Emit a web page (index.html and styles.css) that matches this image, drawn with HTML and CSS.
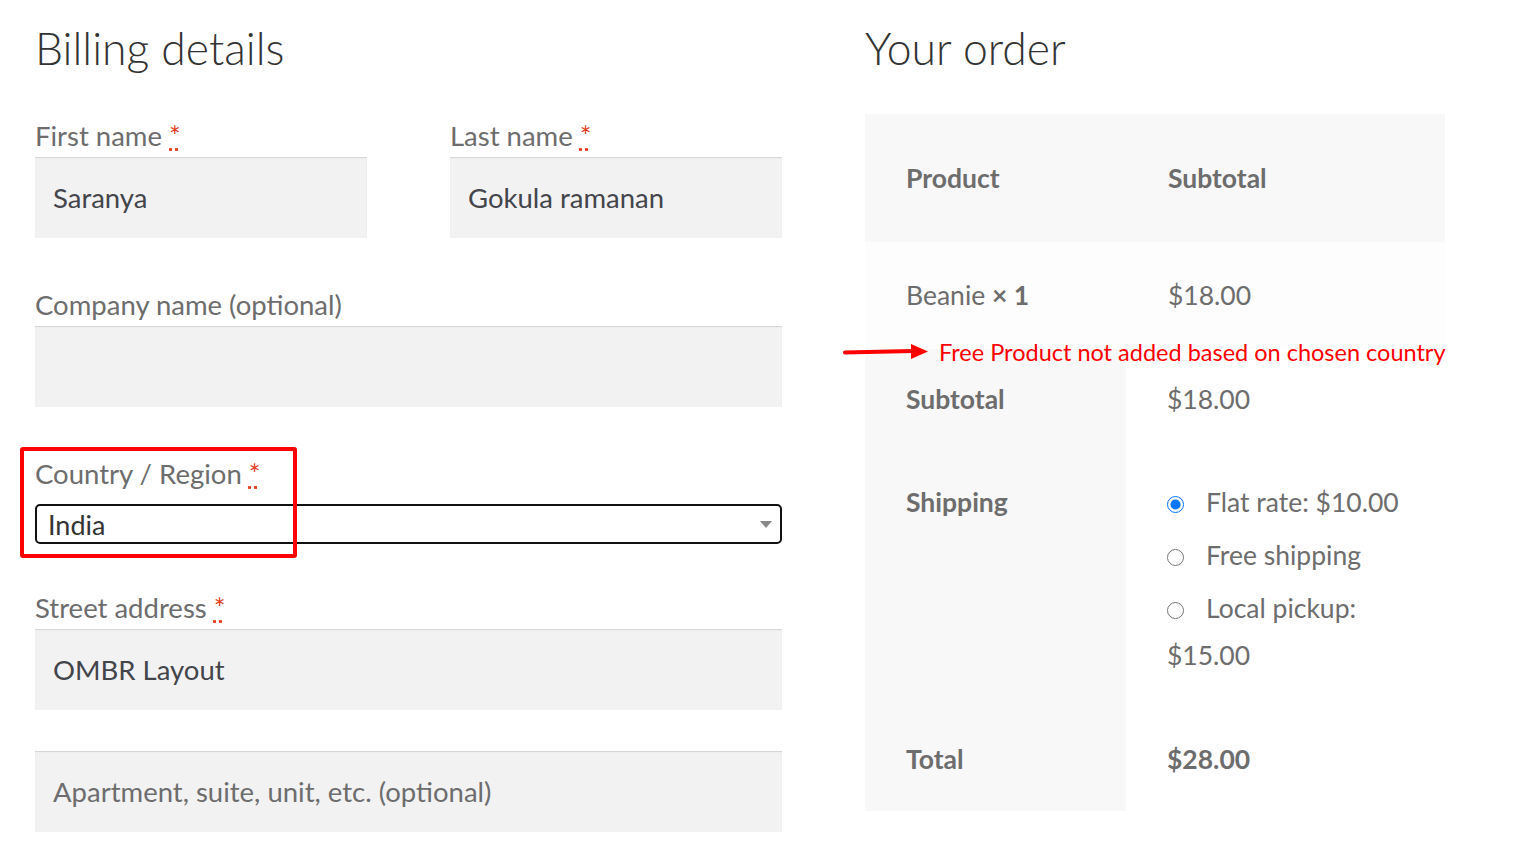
FILE: index.html
```html
<!DOCTYPE html>
<html lang="en">
<head>
  <meta charset="UTF-8">
  <title>Checkout</title>
  <link rel="stylesheet" href="styles.css">
</head>
<body>

<div class="checkout">
  <div class="billing">
    <h3>Billing details</h3>

    <div class="row-split">
      <p class="field">
        <label for="first">First name <abbr class="required" title="required">*</abbr></label>
        <input type="text" id="first" value="Saranya">
      </p>
      <p class="field">
        <label for="last">Last name <abbr class="required" title="required">*</abbr></label>
        <input type="text" id="last" value="Gokula ramanan">
      </p>
    </div>

    <p class="field">
      <label for="company">Company name (optional)</label>
      <input type="text" id="company" value="">
    </p>

    <p class="field field-country">
      <label for="country">Country / Region <abbr class="required" title="required">*</abbr></label>
      <span class="select-wrap">
        <select id="country">
          <option>India</option>
        </select>
      </span>
      <span class="mark-box"></span>
    </p>

    <p class="field field-street">
      <label for="street">Street address <abbr class="required" title="required">*</abbr></label>
      <input type="text" id="street" value="OMBR Layout">
    </p>

    <p class="field">
      <input type="text" id="street2" placeholder="Apartment, suite, unit, etc. (optional)">
    </p>
  </div>

  <div class="order">
    <h3>Your order</h3>

    <table class="order-table">
      <thead>
        <tr>
          <th class="col-name">Product</th>
          <th class="col-total">Subtotal</th>
        </tr>
      </thead>
      <tbody>
        <tr class="cart-item">
          <td>Beanie <strong class="qty">&times;&nbsp;1</strong></td>
          <td>$18.00</td>
        </tr>
      </tbody>
      <tfoot>
        <tr class="row-subtotal">
          <th>Subtotal</th>
          <td>$18.00</td>
        </tr>
        <tr class="row-shipping">
          <th>Shipping</th>
          <td>
            <ul class="ship-methods">
              <li><input type="radio" name="ship" id="flat" checked><label for="flat">Flat rate: $10.00</label></li>
              <li><input type="radio" name="ship" id="free"><label for="free">Free shipping</label></li>
              <li><input type="radio" name="ship" id="pickup"><label for="pickup">Local pickup:</label> $15.00</li>
            </ul>
          </td>
        </tr>
        <tr class="row-total">
          <th>Total</th>
          <td><strong>$28.00</strong></td>
        </tr>
      </tfoot>
    </table>

    <div class="note">
      <svg class="note-arrow" width="86" height="18" viewBox="0 0 86 18">
        <path d="M2 9.5 L70 8" stroke="#f00" stroke-width="4" stroke-linecap="round" fill="none"/>
        <path d="M68 1 L85 8.5 L68 16 Z" fill="#f00"/>
      </svg>
      <span>Free Product not added based on chosen country</span>
    </div>
  </div>
</div>

</body>
</html>
```

FILE: styles.css
```css
body {
  margin: 0;
  background: #fff;
  font-family: Lato, "Liberation Sans", sans-serif;
  color: #6d6d6d;
}
.checkout {
  display: flex;
  gap: 83px;
  padding: 0 0 0 35px;
}
.billing {
  width: 747px;
}
.order {
  width: 580px;
  position: relative;
}
h3 {
  margin: 21px 0 0;
  font-size: 44.5px;
  font-weight: 300;
  line-height: 54px;
  color: #333;
}

.row-split {
  display: flex;
  justify-content: space-between;
  margin-top: 45px;
}
.row-split .field {
  width: 332px;
}
.field {
  margin: 0 0 51px;
  position: relative;
}
.field label {
  display: block;
  font-size: 27.5px;
  line-height: 31px;
  padding-bottom: 6px;
}
.required {
  color: #e2401c;
  text-decoration: underline dotted;
  cursor: help;
}
.field input {
  display: block;
  box-sizing: border-box;
  width: 100%;
  height: 81px;
  margin: 0;
  padding: 0 18px;
  border: 0;
  background: #f2f2f2;
  box-shadow: inset 0 1px 1px rgba(0,0,0,0.125);
  font-family: inherit;
  font-size: 27.5px;
  color: #43454b;
}
.field input::placeholder {
  color: #6d6d6d;
}
.field-country {
  margin-bottom: 48px;
}
.field-street {
  margin-bottom: 41px;
}
.select-wrap {
  display: block;
  position: relative;
  margin-top: 9px;
}
.select-wrap select {
  display: block;
  box-sizing: border-box;
  width: 100%;
  height: 40px;
  padding: 0 11px;
  border: 2px solid #111;
  border-radius: 5px;
  background: #fff;
  appearance: none;
  font-family: inherit;
  font-size: 27px;
  color: #333;
}
.select-wrap::after {
  content: "";
  position: absolute;
  right: 10px;
  top: 17px;
  border-left: 6px solid transparent;
  border-right: 6px solid transparent;
  border-top: 7px solid #888;
}
.mark-box {
  position: absolute;
  left: -15px;
  top: -11px;
  width: 269px;
  height: 103px;
  border: 4px solid #f00;
  border-radius: 3px;
}

.order-table {
  width: 100%;
  margin-top: 39px;
  border-collapse: collapse;
  table-layout: fixed;
  font-size: 26.5px;
  line-height: 37px;
}
.order-table th,
.order-table td {
  box-sizing: border-box;
  text-align: left;
  vertical-align: top;
  padding: 32px 20px 34px 41px;
}
.order-table thead th {
  background: #f8f8f8;
  padding-top: 46px;
  padding-bottom: 45px;
  font-weight: 700;
}
.order-table .col-name {
  width: 261px;
}
.order-table .col-total {
  padding-left: 42px;
}
.order-table td + td {
  padding-left: 42px;
}
.cart-item td {
  background: #fdfdfd;
  padding-top: 35px;
  padding-bottom: 35px;
}
.qty {
  font-weight: 700;
}
.order-table tfoot th {
  background: #f8f8f8;
  font-weight: 700;
}
.order-table tfoot td {
  background: #fff;
}
.row-shipping th,
.row-shipping td {
  line-height: 47px;
  padding-top: 27px;
  padding-bottom: 29px;
}
.row-total th,
.row-total td {
  padding-top: 33px;
  padding-bottom: 33px;
}
.ship-methods {
  list-style: none;
  margin: 0;
  padding: 0;
}
.ship-methods li {
  margin-bottom: 6px;
}
.ship-methods li:last-child {
  margin-bottom: 0;
}
.ship-methods input {
  width: 17px;
  height: 17px;
  margin: 0 22px 0 0;
  vertical-align: -1px;
}

.note {
  position: absolute;
  left: -22px;
  top: 338px;
  display: flex;
  align-items: center;
  gap: 10px;
  white-space: nowrap;
}
.note span {
  font-size: 23.5px;
  color: #f00;
}
```
